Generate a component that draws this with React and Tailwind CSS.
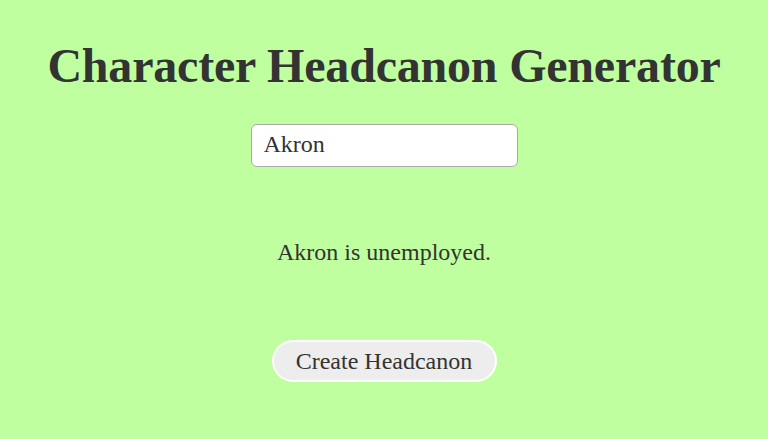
export default function App() {
  return (
    <div className="min-h-[439px] w-full bg-[#bfffa0] text-[#333] flex flex-col items-center">
      <h1 className="mt-[38px] text-[48px] font-bold leading-[56px] tracking-[-0.2px] [font-family:'Liberation_Serif',serif]">
        Character Headcanon Generator
      </h1>
      <input
        defaultValue="Akron"
        className="mt-[30px] w-[267px] h-[43px] bg-white border border-[#aaa] rounded-[6px] pl-[12px] pb-[3px] text-[24px] text-[#333] outline-none [font-family:'Liberation_Serif',serif]"
      />
      <p className="mt-[71px] text-[24px] leading-[28px] [font-family:'Liberation_Serif',serif]">
        Akron is unemployed.
      </p>
      <button className="mt-[74px] w-[225px] h-[42px] rounded-full bg-[#ededed] border-2 border-white text-[24px] leading-[28px] text-[#333] [font-family:'Liberation_Serif',serif]">
        Create Headcanon
      </button>
    </div>
  );
}
